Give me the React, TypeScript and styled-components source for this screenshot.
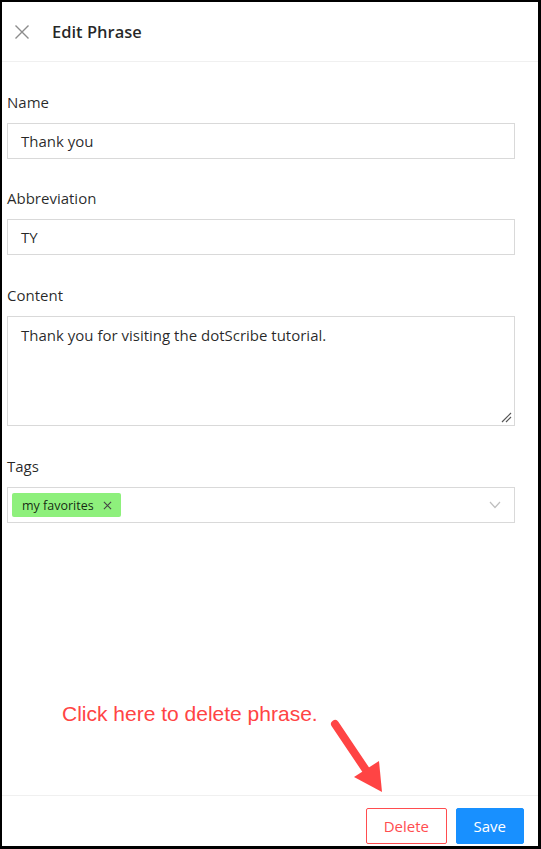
import React from "react";
import styled, { createGlobalStyle } from "styled-components";

const Global = createGlobalStyle`
  html, body { margin: 0; padding: 0; background: #000; }
  * { box-sizing: border-box; }
  body { font-family: "Open Sans", "Noto Sans", sans-serif; }
`;

const Frame = styled.div`
  position: relative;
  width: 541px;
  height: 849px;
  border-style: solid;
  border-color: #000;
  border-width: 2px 3px 3px 2px;
  background: #fff;
  display: flex;
  flex-direction: column;
`;

const Header = styled.header`
  height: 60px;
  display: flex;
  align-items: center;
  gap: 21px;
  padding-left: 11px;
  border-bottom: 1px solid #f0f0f0;
`;

const CloseButton = styled.button`
  width: 18px;
  height: 18px;
  padding: 0;
  border: none;
  background: none;
  display: flex;
  align-items: center;
  justify-content: center;
  color: #8c8c8c;
`;

const Title = styled.h1`
  margin: 0;
  font-size: 16.5px;
  font-weight: 600;
  color: rgba(0, 0, 0, 0.85);
  line-height: 22px;
`;

const Body = styled.main`
  flex: 1;
  padding: 31px 23px 0 5px;
  display: flex;
  flex-direction: column;
  gap: 30px;
`;

const Field = styled.div<{ $offset?: number }>`
  display: flex;
  flex-direction: column;
  gap: 12px;
  margin-top: ${(p) => p.$offset ?? 0}px;
`;

const Label = styled.label`
  font-size: 15px;
  line-height: 18px;
  color: rgba(0, 0, 0, 0.85);
`;

const Control = styled.div<{ $h: number }>`
  height: ${(p) => p.$h}px;
  border: 1px solid #d9d9d9;
  background: #fff;
  position: relative;
  display: flex;
  align-items: ${(p) => (p.$h > 40 ? "flex-start" : "center")};
  padding: ${(p) => (p.$h > 40 ? "7px 13px" : "0 13px")};
  font-size: 15px;
  line-height: 22px;
  color: rgba(0, 0, 0, 0.85);
`;

const SelectBox = styled.div`
  height: 36px;
  border: 1px solid #d9d9d9;
  display: flex;
  align-items: center;
  padding: 0 13px 0 4px;
  justify-content: space-between;
`;

const Tag = styled.span`
  display: inline-flex;
  align-items: center;
  gap: 9px;
  height: 24px;
  padding: 0 9px 0 10px;
  background: #8ef07c;
  border-radius: 2px;
  font-size: 12.5px;
  color: rgba(0, 0, 0, 0.85);
`;

const Resize = styled.svg`
  position: absolute;
  right: 2px;
  bottom: 2px;
`;

const Footer = styled.footer`
  height: 51px;
  border-top: 1px solid #f0f0f0;
  display: flex;
  justify-content: flex-end;
  align-items: flex-start;
  gap: 9px;
  padding: 12px 14px 0 0;
`;

const Button = styled.button<{ $danger?: boolean }>`
  height: 36px;
  padding: 0 ${(p) => (p.$danger ? 16.5 : 17)}px;
  font-family: inherit;
  font-size: 15px;
  border-radius: 2px;
  border: 1px solid ${(p) => (p.$danger ? "#ff4d4f" : "#1890ff")};
  background: ${(p) => (p.$danger ? "#fff" : "#1890ff")};
  color: ${(p) => (p.$danger ? "#ff4d4f" : "#fff")};
`;

const Note = styled.div`
  position: absolute;
  left: 60px;
  top: 700px;
  font-family: "Liberation Sans", Arial, sans-serif;
  font-size: 21px;
  color: #ff4444;
`;

const Arrow = styled.svg`
  position: absolute;
  left: 320px;
  top: 710px;
`;

export default function App() {
  return (
    <>
      <Global />
      <Frame>
        <Header>
          <CloseButton aria-label="close">
            <svg width="16" height="16" viewBox="0 0 16 16">
              <path d="M1.5 1.5 L14.5 14.5 M14.5 1.5 L1.5 14.5" stroke="#8c8c8c" strokeWidth="1.4" />
            </svg>
          </CloseButton>
          <Title>Edit Phrase</Title>
        </Header>
        <Body>
          <Field>
            <Label>Name</Label>
            <Control $h={36}>Thank you</Control>
          </Field>
          <Field>
            <Label>Abbreviation</Label>
            <Control $h={36}>TY</Control>
          </Field>
          <Field $offset={1}>
            <Label>Content</Label>
            <Control $h={110}>
              Thank you for visiting the dotScribe tutorial.
              <Resize width="12" height="12" viewBox="0 0 12 12">
                <path d="M2 11 L11 2 M6 11 L11 6" stroke="#555" strokeWidth="1.2" />
              </Resize>
            </Control>
          </Field>
          <Field $offset={1}>
            <Label>Tags</Label>
            <SelectBox>
              <Tag>
                my favorites
                <svg width="9" height="9" viewBox="0 0 10 10">
                  <path d="M1 1 L9 9 M9 1 L1 9" stroke="#444" strokeWidth="1.2" />
                </svg>
              </Tag>
              <svg width="12" height="8" viewBox="0 0 12 8">
                <path d="M1 1 L6 6.5 L11 1" fill="none" stroke="#bfbfbf" strokeWidth="1.2" />
              </svg>
            </SelectBox>
          </Field>
        </Body>
        <Footer>
          <Button $danger>Delete</Button>
          <Button>Save</Button>
        </Footer>
        <Note>Click here to delete phrase.</Note>
        <Arrow width="70" height="90" viewBox="0 0 70 90">
          <line x1="13" y1="12" x2="52" y2="70" stroke="#ff4444" strokeWidth="8" strokeLinecap="round" />
          <polygon points="32,65 57,49 60,80" fill="#ff4444" />
        </Arrow>
      </Frame>
    </>
  );
}
